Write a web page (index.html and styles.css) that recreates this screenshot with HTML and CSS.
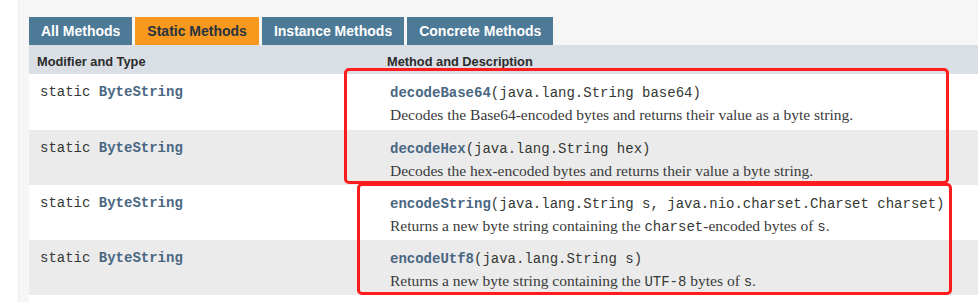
FILE: index.html
```html
<!DOCTYPE html>
<html>
<head>
<meta charset="utf-8">
<link rel="stylesheet" href="styles.css">
</head>
<body>
<div class="page">
  <div class="panel">
    <div class="tabs">
      <span class="tab">All Methods</span>
      <span class="tab active">Static Methods</span>
      <span class="tab">Instance Methods</span>
      <span class="tab">Concrete Methods</span>
    </div>
    <div class="table">
      <div class="row head">
        <div class="c1">Modifier and Type</div>
        <div class="c2">Method and Description</div>
      </div>
      <div class="row">
        <div class="c1"><code>static <a class="type">ByteString</a></code></div>
        <div class="c2">
          <div class="sig"><code><a class="name">decodeBase64</a>(java.lang.String&nbsp;base64)</code></div>
          <div class="desc">Decodes the Base64-encoded bytes and returns their value as a byte string.</div>
        </div>
      </div>
      <div class="row alt">
        <div class="c1"><code>static <a class="type">ByteString</a></code></div>
        <div class="c2">
          <div class="sig"><code><a class="name">decodeHex</a>(java.lang.String&nbsp;hex)</code></div>
          <div class="desc">Decodes the hex-encoded bytes and returns their value a byte string.</div>
        </div>
      </div>
      <div class="row">
        <div class="c1"><code>static <a class="type">ByteString</a></code></div>
        <div class="c2">
          <div class="sig"><code><a class="name">encodeString</a>(java.lang.String&nbsp;s, java.nio.charset.Charset&nbsp;charset)</code></div>
          <div class="desc">Returns a new byte string containing the <code>charset</code>-encoded bytes of <code>s</code>.</div>
        </div>
      </div>
      <div class="row alt">
        <div class="c1"><code>static <a class="type">ByteString</a></code></div>
        <div class="c2">
          <div class="sig"><code><a class="name">encodeUtf8</a>(java.lang.String&nbsp;s)</code></div>
          <div class="desc">Returns a new byte string containing the <code>UTF-8</code> bytes of <code>s</code>.</div>
        </div>
      </div>
    </div>
    <div class="after"></div>
  </div>
  <div class="mark mark1"></div>
  <div class="mark mark2"></div>
</div>
</body>
</html>
```

FILE: styles.css
```css
html, body {
  margin: 0;
  padding: 0;
  background: #ffffff;
}
body {
  font-family: "Liberation Sans", Arial, sans-serif;
  color: #353833;
  overflow: hidden;
}
.page {
  position: relative;
  width: 978px;
  height: 302px;
  padding-left: 18px;
  box-sizing: border-box;
  overflow: hidden;
}
.panel {
  background: #f6f6f6;
  border-left: 1px solid #ececec;
  padding: 17px 0 0 10px;
  height: 100%;
  box-sizing: border-box;
}
.tabs {
  display: flex;
  gap: 3px;
  height: 28px;
}
.tab {
  display: flex;
  align-items: center;
  padding: 0 12px;
  background: #4d7a97;
  color: #ffffff;
  font-weight: bold;
  font-size: 14px;
  white-space: nowrap;
}
.tab.active {
  background: #f8981d;
  color: #253441;
}
.table {
  display: flex;
  flex-direction: column;
}
.row {
  display: grid;
  grid-template-columns: 351px 1fr;
  background: #ffffff;
  height: 55px;
}
.row:nth-child(2) {
  height: 56px;
}
.row.alt {
  background: #ebebec;
}
.row.head {
  background: #dadfe5;
  height: 29px;
  font-weight: bold;
  font-size: 12.8px;
  color: #2b2b2b;
}
.row.head .c1, .row.head .c2 {
  padding: 8px 3px 3px 8px;
  line-height: 18px;
}
.row.head .c2 {
  padding-left: 7px;
}
code {
  font-family: "Liberation Mono", "Courier New", monospace;
  font-size: 14px;
  color: #353833;
}
.row .c1, .row .c2 {
  padding: 8px 3px 0 11px;
}
.row .c2 {
  padding-left: 10px;
}
.c1 code, .sig {
  line-height: 20px;
}
.type, .name {
  font-weight: bold;
  color: #4a6782;
}
.sig {
  white-space: nowrap;
}
.desc {
  margin-top: 2px;
  font-family: "Liberation Serif", "Times New Roman", serif;
  font-size: 15.5px;
  line-height: 20px;
  color: #3a3a3a;
  white-space: nowrap;
}
.desc code {
  font-size: 14px;
}
.after {
  background: #ffffff;
  height: 20px;
}
.mark {
  position: absolute;
  border: 3.5px solid #ff1c1c;
  border-radius: 5px;
  box-sizing: border-box;
}
.mark1 {
  left: 344px;
  top: 68px;
  width: 605px;
  height: 116px;
}
.mark2 {
  left: 357px;
  top: 183px;
  width: 595px;
  height: 112px;
}
```
